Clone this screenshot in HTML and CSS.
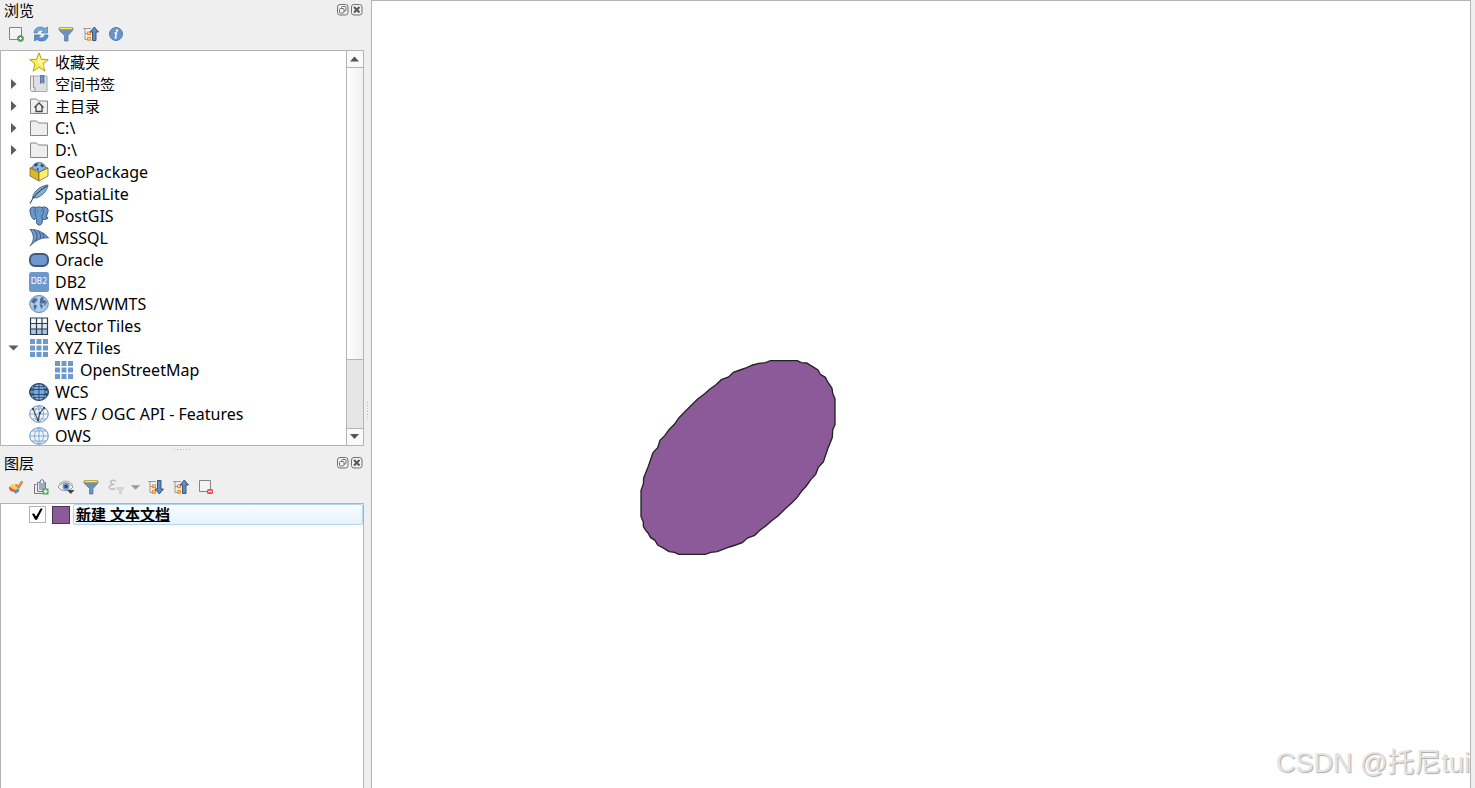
FILE: index.html
```html
<!DOCTYPE html>
<html lang="zh-CN">
<head>
  <meta charset="UTF-8">
  <meta name="viewport" content="width=device-width, initial-scale=1.0">
  <title>QGIS</title>
  <link rel="stylesheet" href="styles.css">
</head>
<body>
  <!-- shared icons -->
  <svg class="defs" aria-hidden="true">
    <symbol id="float" viewBox="0 0 12 12">
      <rect x=".5" y=".5" width="10.500" height="10.500" rx="2.500" fill="#f4f4f2" stroke="#6f6f6b"/>
      <rect x="4.500" y="2.500" width="4.500" height="4.500" rx="1" fill="none" stroke="#6f6f6b"/>
      <rect x="2.500" y="4.500" width="4.500" height="4.500" rx="1" fill="#f4f4f2" stroke="#6f6f6b"/>
    </symbol>
    <symbol id="close" viewBox="0 0 12 12">
      <rect x=".5" y=".5" width="10.500" height="10.500" rx="2.500" fill="#f4f4f2" stroke="#6f6f6b"/>
      <path d="M3 3l5.500 5.500M8.500 3L3 8.500" stroke="#5a5a56" stroke-width="2.200"/>
    </symbol>
    <symbol id="filter" viewBox="0 0 16 16">
      <path d="M1 2h14v2L10 9.500v5.500H6.500V9.500L1 4z" fill="#6a93c4" stroke="#54759c" stroke-width=".7"/>
      <path d="M1.500 1.500h13v2h-13z" fill="#fce94f" stroke="#a99b3d" stroke-width=".7"/>
    </symbol>
    <symbol id="tree-lines" viewBox="0 0 16 16">
      <path d="M0 2.500h8M2 2.500v11h3M2 7.500h3" fill="none" stroke="#9a9a9a"/>
      <path d="M4.700 6h2.600v2.600H4.700zM4.700 11.500h2.600v2.600H4.700z" fill="#fff3dd" stroke="#f08c1a" stroke-width="1.200"/>
    </symbol>
    <symbol id="collapse" viewBox="0 0 16 16">
      <use href="#tree-lines"/>
      <path d="M11.300 1l4.200 5h-2.500v8.500H9.500V6H7z" fill="#5e8cc0" stroke="#2f4d72" stroke-width=".9"/>
    </symbol>
    <symbol id="expand" viewBox="0 0 16 16">
      <use href="#tree-lines"/>
      <path d="M11.300 15l4.200-5h-2.500V1.500H9.500V10H7z" fill="#5e8cc0" stroke="#2f4d72" stroke-width=".9"/>
    </symbol>
    <symbol id="folder" viewBox="0 0 20 20">
      <path d="M1.500 3h6l2 2h9v12.500h-17z" fill="#eee" stroke="#858585"/>
    </symbol>
    <symbol id="tiles" viewBox="0 0 20 20">
      <path d="M1 1h5v5H1zM7.500 1h5v5h-5zM14 1h5v5h-5zM1 7.500h5v5H1zM7.500 7.500h5v5h-5zM14 7.500h5v5h-5zM1 14h5v5H1zM7.500 14h5v5h-5zM14 14h5v5h-5z" fill="#6d99cb"/>
    </symbol>
    <symbol id="globe" viewBox="0 0 20 20">
      <ellipse cx="10" cy="10" rx="9.300" ry="8.300" fill="#f1f6fc" stroke="#6490c4"/>
      <path d="M1 10h18M3 5h14M3 15h14M10 2v16M10 2C4 5 4 15 10 18M10 2c6 3 6 13 0 16" fill="none" stroke="#7ba4d3" stroke-width=".9"/>
    </symbol>
    <symbol id="closed" viewBox="0 0 24 22"><path d="M10 6l5.500 5L10 16z" fill="#5b5b5b"/></symbol>
    <symbol id="opened" viewBox="0 0 24 22"><path d="M7.500 8.500h10l-5 5z" fill="#5b5b5b"/></symbol>
  </svg>

  <aside class="docks">
    <section class="dock browser">
      <header class="dock-title">
        <h2>浏览</h2>
        <button aria-label="浮动"><svg><use href="#float"/></svg></button>
        <button aria-label="关闭"><svg><use href="#close"/></svg></button>
      </header>
      <div class="toolbar">
        <button aria-label="添加图层">
          <svg viewBox="0 0 16 16"><path d="M1.500 1.500h12v12h-12z" fill="#f4f4f4" stroke="#858585"/><circle cx="12.500" cy="12.500" r="3" fill="#5ba06a" stroke="#44854f" stroke-width=".7"/><path d="M12.500 11v3M11 12.500h3" stroke="#fff"/></svg>
        </button>
        <button aria-label="刷新">
          <svg viewBox="0 0 16 16"><path d="M1 7C1 1 8-.5 12 2.500L14.500 1v6H8.500l2-2C8 3.300 5 4 4.200 7z" fill="#75a5d9" stroke="#4a7fb8" stroke-width=".7"/><path d="M15 9c0 6-7 7.500-11 4.500L1.500 15V9h6l-2 2c2.500 1.700 5.500 1 6.300-2z" fill="#5b8fca" stroke="#3e72ad" stroke-width=".7"/></svg>
        </button>
        <button aria-label="过滤"><svg><use href="#filter"/></svg></button>
        <button aria-label="全部折叠"><svg><use href="#collapse"/></svg></button>
        <button aria-label="属性">
          <svg viewBox="0 0 16 16"><circle cx="8" cy="8" r="6.500" fill="#6694c8" stroke="#5580b0"/><circle cx="9" cy="4.500" r="1.200" fill="#fff"/><path d="M6.500 7h2L7.300 11.800h1.500" fill="none" stroke="#fff" stroke-width="1.400"/></svg>
        </button>
      </div>
      <div class="tree-box">
        <ul class="tree">
          <li class="zh">
            <span class="twisty"></span>
            <svg viewBox="0 0 20 20"><path d="M10 .8l2.500 6.500 6.800.4-5.300 4.300 1.900 7.200-5.900-4-5.900 4L6 12 .7 7.700l6.800-.4z" fill="#fcee50" stroke="#b59f20"/><path d="M10 3.500L8 9l2 2 5 5-2-5 3.500-2.500H12z" fill="#fff9a0"/></svg>
            收藏夹
          </li>
          <li class="zh">
            <button class="twisty" aria-label="展开"><svg><use href="#closed"/></svg></button>
            <svg viewBox="0 0 20 20"><path d="M4.500 2h13.500v15.500H4.500z" fill="#dfe0e2" stroke="#aaa"/><path d="M1.500 2h3v11.500h1.500v4H3c-1 0-1.500-1-1.500-2z" fill="#ececec" stroke="#999"/><path d="M11.500 1.500h3.500v8l-1.700-1.500-1.800 1.500z" fill="#6b95c8" stroke="#476d9c" stroke-width=".8"/></svg>
            空间书签
          </li>
          <li class="zh">
            <button class="twisty" aria-label="展开"><svg><use href="#closed"/></svg></button>
            <svg viewBox="0 0 20 20"><use href="#folder"/><path d="M5.500 11.500L10 7l4.500 4.500M7 10.500v5h6v-5" fill="none" stroke="#444" stroke-width="1.300"/></svg>
            主目录
          </li>
          <li>
            <button class="twisty" aria-label="展开"><svg><use href="#closed"/></svg></button>
            <svg><use href="#folder"/></svg>
            C:\
          </li>
          <li>
            <button class="twisty" aria-label="展开"><svg><use href="#closed"/></svg></button>
            <svg><use href="#folder"/></svg>
            D:\
          </li>
          <li>
            <span class="twisty"></span>
            <svg viewBox="0 0 20 20"><path d="M1 6l9 4v9l-9-5z" fill="#dfb625" stroke="#705d19" stroke-width=".7"/><path d="M19 6l-9 4v9l9-5z" fill="#fff06a" stroke="#705d19" stroke-width=".7"/><path d="M1 6l9-4 9 4-9 4z" fill="#cfb850" stroke="#705d19" stroke-width=".6"/><path d="M3.500 6c0-7.500 13-7.500 13 0 0 1-3.500 2.500-6.500 4-3-1.500-6.500-3-6.500-4z" fill="#91b5da" stroke="#49698e" stroke-width=".7"/><path d="M5.500 2l3-1 .5 2-2 1.500L5 4zM12 1.500l3 2-1 2-2.500-1.500zM7.500 6l2 .5.500 2-2-.5z" fill="#304f76"/></svg>
            GeoPackage
          </li>
          <li>
            <span class="twisty"></span>
            <svg viewBox="0 0 20 20"><path d="M19 1C11 2 5 7 3.500 13.500L7 14C12 12.500 18 8 19 1z" fill="#89afd9" stroke="#3f5d80" stroke-width=".9"/><path d="M1 19.500C4 13 9 7 18 2" fill="none" stroke="#344d6b" stroke-width="1.100"/></svg>
            SpatiaLite
          </li>
          <li>
            <span class="twisty"></span>
            <svg viewBox="0 0 20 20"><path d="M7 1.500C3 0 .5 2 1 5c.4 4 2 8 4 8.500 1.200 0 1.500-1 2.200-1.500.6 2-.2 5 1.300 6.500 1.500 1.200 4 .6 4.500-1.500l.5-3.500 4.500-.5 1-1.500-2-.5C18.500 8 19.500 5 19 3c-1-2-4-2.500-6-1.500-1.500-.8-4-.8-6 0z" fill="#6b98ca" stroke="#3d5d83"/><path d="M7 1.500C5 4 6 8 7.500 11M13 1.500c2 2 2 6 0 8v4M8 5h1M12 5h1" fill="none" stroke="#3d5d83"/></svg>
            PostGIS
          </li>
          <li>
            <span class="twisty"></span>
            <svg viewBox="0 0 20 20"><path d="M1 1.500c7-.5 15 3.500 18.500 8.500C13 9 7 12 1 18 6 12 5 6 1 1.500z" fill="#6f99cb" stroke="#47658a"/><path d="M5 2c4 4 4 8 1 11.500M9 3c3 3 3 5 2 8M13 5c2 2 2 3 1.500 5" fill="none" stroke="#3b587b"/></svg>
            MSSQL
          </li>
          <li>
            <span class="twisty"></span>
            <svg viewBox="0 0 20 20"><rect x="1" y="4" width="18" height="12" rx="5" fill="#6c98cb" stroke="#40597a" stroke-width="2"/></svg>
            Oracle
          </li>
          <li>
            <span class="twisty"></span>
            <svg viewBox="0 0 20 20"><rect width="20" height="20" rx="2.500" fill="#6c98cb"/><text class="db2" x="10" y="12" text-anchor="middle">DB2</text></svg>
            DB2
          </li>
          <li>
            <span class="twisty"></span>
            <svg viewBox="0 0 20 20"><ellipse cx="10" cy="10" rx="9.300" ry="8.500" fill="#a9c8e9" stroke="#6288b2"/><path d="M2 7l3-3 3 .5.500 2-2 1.500-1 2-2-1zM5 10l3 1.500-1 3-1.500 1.500-1-3zM11 5l2-2 2 1-1 2 3 .5 1 3-2 2.500-2-2.500-1 .5 1 2-1.500 3-1.500-3-1-2 1-2z" fill="#4e7097"/><path d="M1 10h18M10 2v16" stroke="#c9dcef" stroke-width=".6"/></svg>
            WMS/WMTS
          </li>
          <li>
            <span class="twisty"></span>
            <svg viewBox="0 0 20 20"><path d="M2 2h16v5H2z" fill="#f7f9fc"/><path d="M2 7h16v5.500H2z" fill="#e1e9f3"/><path d="M2 12.500h16V18H2z" fill="#a9c5e3"/><path d="M1.500 2h17v16.500h-17zM1.500 7.500h17M1.500 13h17M7.500 2v16M13 2v16" fill="none" stroke="#2b3b50" stroke-width="1.200"/></svg>
            Vector Tiles
          </li>
          <li>
            <button class="twisty" aria-label="折叠"><svg><use href="#opened"/></svg></button>
            <svg><use href="#tiles"/></svg>
            XYZ Tiles
          </li>
          <li class="child">
            <span class="twisty"></span>
            <svg><use href="#tiles"/></svg>
            OpenStreetMap
          </li>
          <li>
            <span class="twisty"></span>
            <svg viewBox="0 0 20 20"><ellipse cx="10" cy="10" rx="9.500" ry="8.500" fill="#35577e" stroke="#284565"/><path d="M5.500 5h9l1 5-1 5h-9l-1-5z" fill="#7ca8d9"/><path d="M6 4c2-2 6-2 8 0zM6 16c2 2 6 2 8 0z" fill="#a9c8ea"/><path d="M1 7.500h18M1 12.500h18M10 2v16" stroke="#2d4d73"/><path d="M1.500 10h2.500M16 10h2.500M3 5.500h1.500M15.500 5.500H17M3 14.500h1.500M15.500 14.500H17" stroke="#8eb2dc" stroke-width="1.500"/></svg>
            WCS
          </li>
          <li>
            <span class="twisty"></span>
            <svg viewBox="0 0 20 20"><use href="#globe"/><path d="M4 5l5 11 2-7 4-5" fill="none" stroke="#555" stroke-width="1.200"/><path d="M3 4h2v2H3zM8 15h2v2H8zM10 8h2v2h-2zM14 3h2v2h-2z" fill="#444"/></svg>
            WFS / OGC API - Features
          </li>
          <li>
            <span class="twisty"></span>
            <svg><use href="#globe"/></svg>
            OWS
          </li>
        </ul>
        <div class="scrollbar">
          <button aria-label="向上滚动"><svg viewBox="0 0 16 16"><path d="M3 10.500h9L7.500 5.500z" fill="#555"/></svg></button>
          <div class="groove"><div class="thumb"></div></div>
          <button aria-label="向下滚动"><svg viewBox="0 0 16 16"><path d="M3 5h9l-4.500 5z" fill="#555"/></svg></button>
        </div>
      </div>
    </section>

    <div class="splitter"></div>

    <section class="dock layers">
      <header class="dock-title">
        <h2>图层</h2>
        <button aria-label="浮动"><svg><use href="#float"/></svg></button>
        <button aria-label="关闭"><svg><use href="#close"/></svg></button>
      </header>
      <div class="toolbar">
        <button aria-label="图层样式">
          <svg viewBox="0 0 16 16"><path d="M9 8l4.500-6 1.500 1-4 6.500z" fill="#d8a14d" stroke="#a87532" stroke-width=".6"/><path d="M4.500 5l7 5.500-2.500 2.500-8-5z" fill="#f2cc55"/><path d="M1 7.500l8 5-1 1.500-6-2.500-1-2z" fill="#e2594c"/><path d="M6 12l4-2.500 1.500 2.500-4 3z" fill="#5c8fca"/><path d="M6 5.500l5 4.500 1-2-3-3z" fill="#dd8d38"/></svg>
        </button>
        <button aria-label="添加组">
          <svg viewBox="0 0 16 16"><path d="M3.500 5.500h-2v9h8" fill="none" stroke="#777"/><path d="M6.500 3.500h-2v9h8v-9h-1" fill="#eee" stroke="#777"/><path d="M7 11V3c0-3 4-3 4 0v7c0 2-2 2-2 0V4" fill="none" stroke="#4d6b8d"/><path d="M9.500 9.500h6v6h-6z" fill="#55985f"/><path d="M12.500 10.500v4M10.500 12.500h4" stroke="#fff" stroke-width="1.500"/></svg>
        </button>
        <button aria-label="管理地图主题">
          <svg viewBox="0 0 16 16"><path d="M0 8c3-5 11-6 15 0-4 5-11 5-15 0z" fill="#eef1f5" stroke="#909090"/><path d="M1 5C5 1 11 1 15 6" fill="none" stroke="#aaa"/><circle cx="8" cy="7.500" r="3.500" fill="#7097c5"/><circle cx="8" cy="7.500" r="1.800" fill="#2f4867"/><path d="M9 11h7.500l-3.700 4z" fill="#444"/></svg>
        </button>
        <button aria-label="过滤图例"><svg><use href="#filter"/></svg></button>
        <button aria-label="按表达式过滤" disabled>
          <svg viewBox="0 0 16 16"><path d="M8 2.500C4-.5 0 3 5 5.500-1 6.500 1 12 7 9.500" fill="none" stroke="#bcbcbc" stroke-width="1.400"/><path d="M8 8h8v2l-2 2v3.500h-3V12l-3-2z" fill="#d5d5d5"/></svg>
        </button>
        <button class="drop" aria-label="过滤选项" disabled><svg viewBox="0 0 16 16"><path d="M3 6h10l-5 5z" fill="#9b9b9b"/></svg></button>
        <button aria-label="全部展开"><svg><use href="#expand"/></svg></button>
        <button aria-label="全部折叠"><svg><use href="#collapse"/></svg></button>
        <button aria-label="移除图层">
          <svg viewBox="0 0 16 16"><path d="M1.500 1.500h11v11h-11z" fill="#f4f4f4" stroke="#858585"/><rect x="9" y="10" width="6" height="5" rx="1.500" fill="#e74b4e"/><path d="M10 12.500h4" stroke="#fff" stroke-width="1.300"/></svg>
        </button>
      </div>
      <div class="layer-list">
        <div class="layer">
          <input type="checkbox" id="layer1" checked>
          <span class="swatch"></span>
          <label for="layer1">新建 文本文档</label>
        </div>
      </div>
    </section>
  </aside>

  <div class="grip"></div>

  <main class="canvas">
    <svg class="feature" viewBox="0 0 645 645">
      <polygon points="422,32 502,32 514,38 530,39 548,50 564,60 571,73 586,82 593,96 606,115 608,130 615,147 615,224 608,240 607,262 600,280 593,297 580,336 565,352 557,373 543,388 529,408 515,423 501,443 485,459 465,477 444,498 424,513 408,527 388,542 374,556 352,564 337,578 317,585 298,591 262,605 242,607 226,613 146,613 134,607 117,605 98,593 83,585 75,571 62,563 54,549 47,541 40,529 40,516 33,499 33,421 40,402 41,384 48,366 55,349 69,308 83,293 90,271 104,257 117,239 133,223 147,203 163,187 203,147 224,131 239,118 258,104 274,89 296,81 310,67 330,60 350,53 368,45 386,40 406,38"/>
    </svg>
    <span class="watermark">CSDN @托尼tui</span>
  </main>
</body>
</html>
```
FILE: styles.css
```css
* {
  box-sizing: border-box;
}

body {
  margin: 0;
  height: 100vh;
  display: flex;
  overflow: hidden;
  background: #efefef;
  color: #000;
  font-family: "Noto Sans", "Noto Sans CJK SC", sans-serif;
  font-size: 15px;
  line-height: 22px;
}

button {
  display: flex;
  align-items: center;
  justify-content: center;
  padding: 0;
  border: none;
  background: none;
}

.defs {
  position: absolute;
  width: 0;
  height: 0;
}

/* left docks */
.docks {
  width: 364px;
  flex: none;
  display: flex;
  flex-direction: column;
}

.dock {
  display: flex;
  flex-direction: column;
  min-height: 0;
}

.browser {
  flex: 446 0 0;
}

.layers {
  flex: 335 0 0;
}

.dock-title {
  display: flex;
  gap: 2px;
  height: 22px;
  padding: 0 1px 0 4px;
}

.dock-title h2 {
  flex: 1;
  margin: 0;
  font-size: 15px;
  font-weight: normal;
  line-height: 20px;
}

.dock-title button {
  height: 20px;
}

.dock-title svg {
  width: 12px;
  height: 12px;
}

.toolbar {
  display: flex;
  height: 28px;
  padding: 0 3px 4px;
}

.toolbar button {
  width: 25px;
}

.toolbar .drop {
  width: 15px;
}

.toolbar svg {
  width: 16px;
  height: 16px;
}

/* browser tree */
.tree-box {
  flex: 1;
  min-height: 0;
  display: flex;
  overflow: hidden;
  background: #fff;
  border: 1px solid #b4b4b4;
}

.tree {
  flex: 1;
  margin: 0;
  padding: 0;
  list-style: none;
  font-size: 16px;
}

.tree li {
  display: flex;
  align-items: center;
  height: 22px;
  white-space: nowrap;
}

.tree .zh {
  font-size: 15px;
}

.tree li > svg {
  width: 20px;
  height: 20px;
  margin-right: 6px;
}

.tree .child {
  padding-left: 25px;
}

.twisty {
  width: 24px;
  height: 22px;
  margin-right: 4px;
}

.twisty svg {
  width: 24px;
  height: 22px;
}

.db2 {
  fill: #fff;
  font-family: "DejaVu Sans", sans-serif;
  font-size: 8px;
}

.scrollbar {
  width: 17px;
  display: flex;
  flex-direction: column;
  border-left: 1px solid #b4b4b4;
  background: #e6e6e6;
}

.scrollbar button {
  height: 16px;
  background: #fafafa;
}

.scrollbar svg {
  width: 16px;
  height: 16px;
}

.groove {
  flex: 1;
  border-top: 1px solid #b4b4b4;
  border-bottom: 1px solid #b4b4b4;
}

.thumb {
  height: 81%;
  background: linear-gradient(to right, #fff, #f0f0f0);
  border-bottom: 1px solid #b4b4b4;
}

.splitter {
  height: 7px;
  display: flex;
  align-items: center;
  justify-content: center;
}

.splitter::before {
  content: "";
  width: 17px;
  height: 1px;
  background: repeating-linear-gradient(to right, #b4b4b4 0 1px, transparent 1px 3px);
}

.grip {
  width: 7px;
  flex: none;
  display: flex;
  align-items: center;
  justify-content: center;
  padding-top: 32px;
}

.grip::before {
  content: "";
  width: 1px;
  height: 17px;
  background: repeating-linear-gradient(#b4b4b4 0 1px, transparent 1px 3px);
}

/* layer list */
.layer-list {
  flex: 1;
  background: #fff;
  border: 1px solid #b4b4b4;
  border-bottom: none;
}

.layer {
  display: flex;
  align-items: center;
  height: 21px;
  padding-left: 28px;
}

.layer input {
  appearance: none;
  width: 17px;
  height: 17px;
  margin: 0 6px 0 0;
  border: 1px solid #b4b4b4;
  background: #fff;
}

.layer input:checked::before {
  content: "";
  display: block;
  width: 12px;
  height: 12px;
  margin: 1px;
  background: #000;
  clip-path: polygon(8% 48%, 26% 45%, 42% 70%, 80% 4%, 98% 4%, 50% 98%, 34% 98%);
}

.swatch {
  width: 18px;
  height: 18px;
  margin-right: 3px;
  background: #8d5a99;
  border: 1px solid #4c3353;
}

.layer label {
  flex: 1;
  height: 21px;
  padding-left: 2px;
  line-height: 19px;
  font-weight: bold;
  text-decoration: underline;
  border: 1px solid #b5d6ee;
  border-radius: 2px;
  background: linear-gradient(#f8fcff, #e6f3fd);
}

/* map */
.canvas {
  flex: 1;
  position: relative;
  margin-right: 4px;
  overflow: hidden;
  background: #fff;
  border: 1px solid #b4b4b4;
  border-bottom: none;
}

.feature {
  position: absolute;
  left: 258px;
  top: 349px;
  width: 215px;
  height: 215px;
}

.feature polygon {
  fill: #8d5a99;
  stroke: #232323;
  stroke-width: 4;
}

.watermark {
  position: absolute;
  right: 0;
  bottom: 5px;
  font-family: "Liberation Sans", "Noto Sans CJK SC", sans-serif;
  font-size: 27px;
  line-height: 40px;
  color: #e4e4e4;
  text-shadow: 1px 1px 1px #aaa;
  white-space: nowrap;
}
```
